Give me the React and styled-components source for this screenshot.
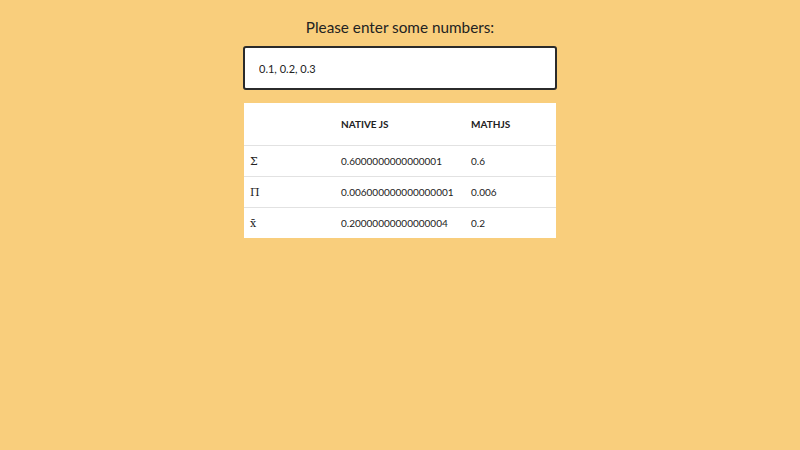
import React from "react";
import styled, { createGlobalStyle } from "styled-components";

const Global = createGlobalStyle`
  html, body { margin: 0; padding: 0; }
  body {
    background: #f9ce7c;
    font-family: Lato, "Noto Sans", sans-serif;
    color: #222;
    min-height: 450px;
  }
`;

const Page = styled.main`
  width: 314px;
  margin: 0 auto;
  padding-top: 18px;
  display: flex;
  flex-direction: column;
  align-items: stretch;
`;

const Title = styled.h1`
  margin: 0 0 10px;
  font-size: 15.3px;
  font-weight: 400;
  line-height: 18px;
  text-align: center;
  color: #222;
`;

const NumberInput = styled.input`
  box-sizing: border-box;
  height: 44px;
  width: 100%;
  margin: 0 0 13px;
  padding: 0 14px;
  border: 2px solid #2b2b2b;
  border-radius: 3px;
  background: #fff;
  font-family: Lato, "Noto Sans", sans-serif;
  font-size: 11px;
  color: #222;
  outline: none;
`;

const Table = styled.table`
  width: 312px;
  margin: 0 1px;
  border-collapse: collapse;
  background: #fff;
  table-layout: fixed;
`;

const Col = styled.col`
  width: ${(p) => p.$w}px;
`;

const Th = styled.th`
  height: 42px;
  padding: 0 6px;
  text-align: left;
  font-weight: 700;
  font-size: 10px;
  vertical-align: middle;
`;

const Row = styled.tr`
  border-top: 1px solid #e2e2e2;
`;

const Td = styled.td`
  height: 30px;
  padding: 0 6px;
  vertical-align: middle;
  white-space: nowrap;
  font-family: ${(p) => (p.$symbol ? '"DejaVu Serif", "Liberation Serif", serif' : 'Lato, "Noto Sans", sans-serif')};
  font-size: ${(p) => (p.$symbol ? "11px" : "10px")};
`;

const rows = [
  ["Σ", "0.6000000000000001", "0.6"],
  ["Π", "0.006000000000000001", "0.006"],
  ["x̄", "0.20000000000000004", "0.2"],
];

export default function App() {
  return (
    <>
      <Global />
      <Page>
        <Title>Please enter some numbers:</Title>
        <NumberInput defaultValue="0.1, 0.2, 0.3" />
        <Table>
          <colgroup>
            <Col $w={91} />
            <Col $w={130} />
            <Col $w={91} />
          </colgroup>
          <thead>
            <tr>
              <Th />
              <Th>NATIVE JS</Th>
              <Th>MATHJS</Th>
            </tr>
          </thead>
          <tbody>
            {rows.map(([sym, native, math]) => (
              <Row key={sym}>
                <Td $symbol>{sym}</Td>
                <Td>{native}</Td>
                <Td>{math}</Td>
              </Row>
            ))}
          </tbody>
        </Table>
      </Page>
    </>
  );
}
